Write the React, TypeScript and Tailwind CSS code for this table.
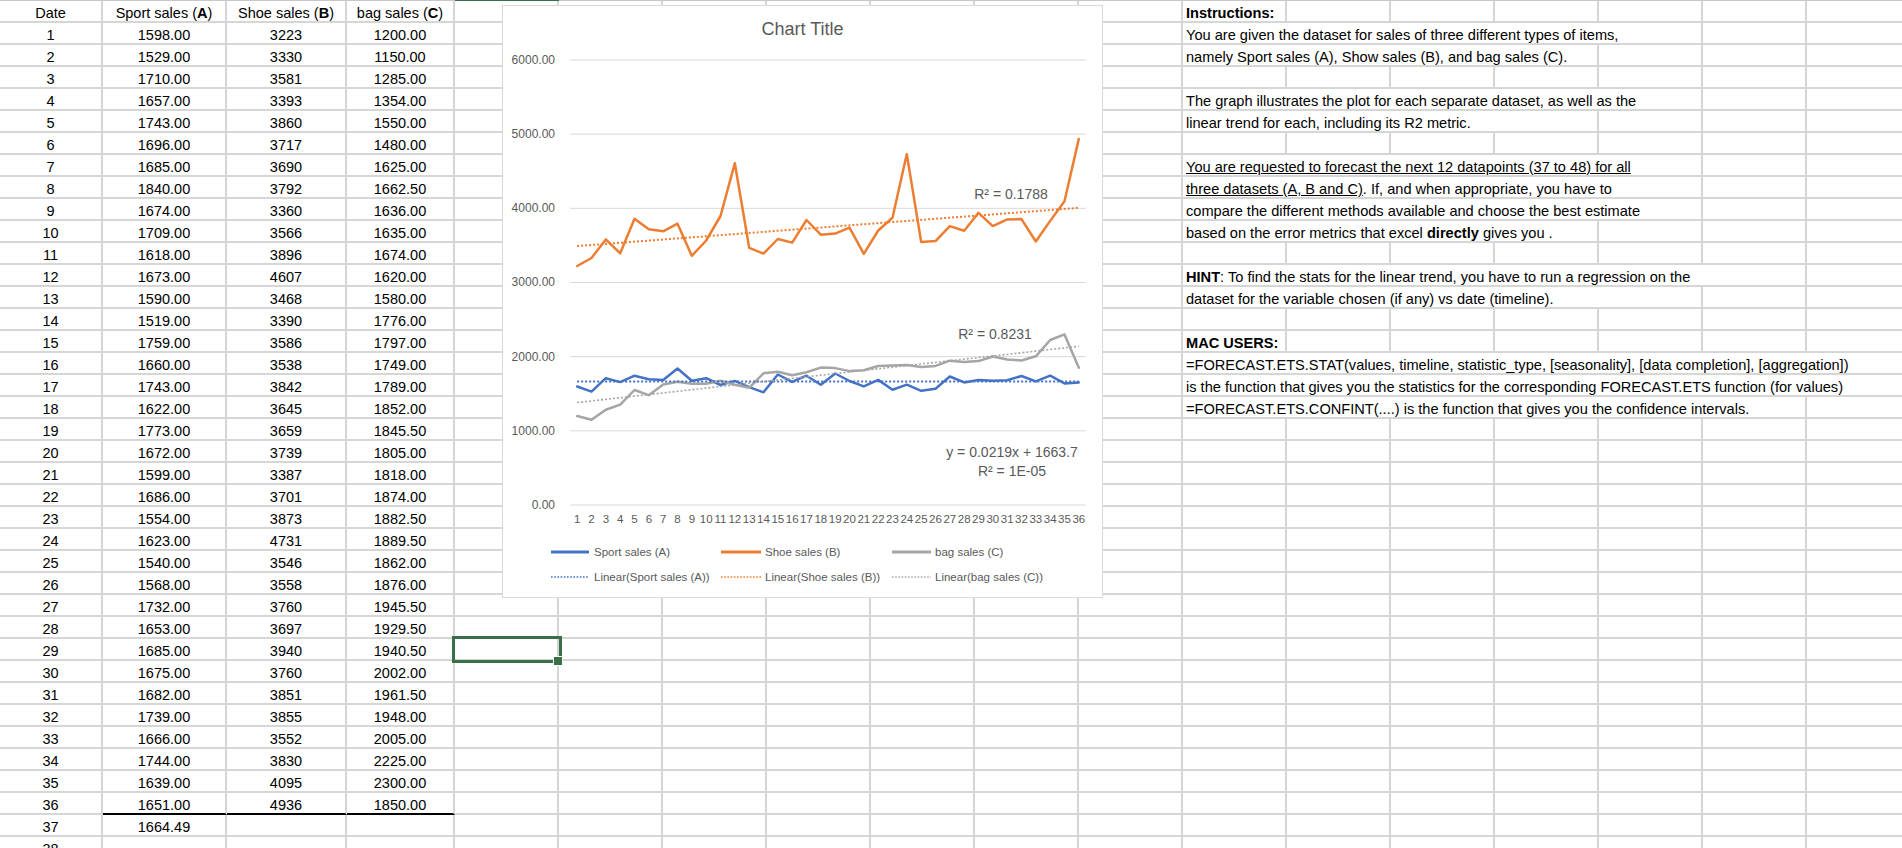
import React from "react";

const sport = [1598,1529,1710,1657,1743,1696,1685,1840,1674,1709,1618,1673,1590,1519,1759,1660,1743,1622,1773,1672,1599,1686,1554,1623,1540,1568,1732,1653,1685,1675,1682,1739,1666,1744,1639,1651];
const shoe = [3223,3330,3581,3393,3860,3717,3690,3792,3360,3566,3896,4607,3468,3390,3586,3538,3842,3645,3659,3739,3387,3701,3873,4731,3546,3558,3760,3697,3940,3760,3851,3855,3552,3830,4095,4936];
const bag = [1200,1150,1285,1354,1550,1480,1625,1662.5,1636,1635,1674,1620,1580,1776,1797,1749,1789,1852,1845.5,1805,1818,1874,1882.5,1889.5,1862,1876,1945.5,1929.5,1940.5,2002,1961.5,1948,2005,2225,2300,1850];

const X0 = 67;
const PW = 516;
const Y0 = 499;
const STEP = 74.17;
const px = (i: number) => X0 + (i + 0.5) * (PW / 36);
const py = (v: number) => Y0 - (v / 1000) * STEP;

function linreg(ys: number[]) {
  const n = ys.length;
  let sx = 0, sy = 0, sxx = 0, sxy = 0;
  ys.forEach((y, i) => {
    const x = i + 1;
    sx += x; sy += y; sxx += x * x; sxy += x * y;
  });
  const slope = (n * sxy - sx * sy) / (n * sxx - sx * sx);
  const intercept = (sy - slope * sx) / n;
  return { slope, intercept };
}

const pts = (ys: number[]) => ys.map((v, i) => `${px(i).toFixed(1)},${py(v).toFixed(1)}`).join(" ");

function Trend({ ys, color, w }: { ys: number[]; color: string; w: number }) {
  const { slope, intercept } = linreg(ys);
  return (
    <line
      x1={px(0)}
      y1={py(intercept + slope * 1)}
      x2={px(35)}
      y2={py(intercept + slope * 36)}
      stroke={color}
      strokeWidth={w}
      strokeDasharray="2 2"
    />
  );
}

function Chart() {
  const grey = "#595959";
  return (
    <div className="absolute left-[502px] top-[5px] w-[601px] h-[593px] bg-white border border-[#d9d9d9]">
      <svg width={599} height={591} className="block" fontFamily="'Liberation Sans', Arial, sans-serif">
        <text x={299.5} y={23} textAnchor="middle" dominantBaseline="central" fontSize={18} fill={grey}>
          Chart Title
        </text>
        {[6000, 5000, 4000, 3000, 2000, 1000, 0].map((v) => (
          <g key={v}>
            <line x1={X0} x2={X0 + PW} y1={py(v)} y2={py(v)} stroke="#d9d9d9" strokeWidth={1} />
            <text x={52} y={py(v)} textAnchor="end" dominantBaseline="central" fontSize={12} fill={grey}>
              {v === 0 ? "0.00" : `${v}.00`}
            </text>
          </g>
        ))}
        {Array.from({ length: 36 }, (_, i) => (
          <text key={i} x={px(i)} y={513} textAnchor="middle" dominantBaseline="central" fontSize={11.5} fill={grey}>
            {i + 1}
          </text>
        ))}
        <polyline points={pts(sport)} fill="none" stroke="#4472C4" strokeWidth={2.5} strokeLinejoin="round" strokeLinecap="round" />
        <polyline points={pts(shoe)} fill="none" stroke="#ED7D31" strokeWidth={2.5} strokeLinejoin="round" strokeLinecap="round" />
        <polyline points={pts(bag)} fill="none" stroke="#A5A5A5" strokeWidth={2.5} strokeLinejoin="round" strokeLinecap="round" />
        <Trend ys={sport} color="#4472C4" w={2} />
        <Trend ys={shoe} color="#ED7D31" w={2} />
        <Trend ys={bag} color="#A5A5A5" w={1.6} />

        <text x={508} y={188} textAnchor="middle" dominantBaseline="central" fontSize={14} fill={grey}>
          R² = 0.1788
        </text>
        <text x={492} y={328} textAnchor="middle" dominantBaseline="central" fontSize={14} fill={grey}>
          R² = 0.8231
        </text>
        <text x={509} y={446} textAnchor="middle" dominantBaseline="central" fontSize={14} fill={grey}>
          y = 0.0219x + 1663.7
        </text>
        <text x={509} y={465} textAnchor="middle" dominantBaseline="central" fontSize={14} fill={grey}>
          R² = 1E-05
        </text>

        {/* legend */}
        <line x1={48} x2={86} y1={546} y2={546} stroke="#4472C4" strokeWidth={3} />
        <text x={91} y={546} dominantBaseline="central" fontSize={11.5} fill={grey}>Sport sales (A)</text>
        <line x1={218} x2={258} y1={546} y2={546} stroke="#ED7D31" strokeWidth={3} />
        <text x={262} y={546} dominantBaseline="central" fontSize={11.5} fill={grey}>Shoe sales (B)</text>
        <line x1={389} x2={428} y1={546} y2={546} stroke="#A5A5A5" strokeWidth={3} />
        <text x={432} y={546} dominantBaseline="central" fontSize={11.5} fill={grey}>bag sales (C)</text>

        <line x1={48} x2={86} y1={571} y2={571} stroke="#4472C4" strokeWidth={1.6} strokeDasharray="1.6 1.6" />
        <text x={91} y={571} dominantBaseline="central" fontSize={11.5} fill={grey}>Linear(Sport sales (A))</text>
        <line x1={218} x2={258} y1={571} y2={571} stroke="#ED7D31" strokeWidth={1.6} strokeDasharray="1.6 1.6" />
        <text x={262} y={571} dominantBaseline="central" fontSize={11.5} fill={grey}>Linear(Shoe sales (B))</text>
        <line x1={389} x2={428} y1={571} y2={571} stroke="#A5A5A5" strokeWidth={1.4} strokeDasharray="1.6 1.6" />
        <text x={432} y={571} dominantBaseline="central" fontSize={11.5} fill={grey}>Linear(bag sales (C))</text>
      </svg>
    </div>
  );
}

const instr: Record<number, { span: number; node: React.ReactNode }> = {
  0: { span: 1, node: <b>Instructions:</b> },
  1: { span: 5, node: "You are given the dataset for sales of three different types of items," },
  2: { span: 4, node: "namely Sport sales (A), Show sales (B), and bag sales (C)." },
  4: { span: 5, node: "The graph illustrates the plot for each separate dataset, as well as the" },
  5: { span: 4, node: "linear trend for each, including its R2 metric." },
  7: { span: 5, node: <u>You are requested to forecast the next 12 datapoints (37 to 48) for all</u> },
  8: {
    span: 5,
    node: (
      <>
        <u>three datasets (A, B and C)</u>. If, and when appropriate, you have to
      </>
    ),
  },
  9: { span: 5, node: "compare the different methods available and choose the best estimate" },
  10: {
    span: 4,
    node: (
      <>
        based on the error metrics that excel <b>directly</b> gives you .
      </>
    ),
  },
  12: {
    span: 6,
    node: (
      <>
        <b>HINT</b>: To find the stats for the linear trend, you have to run a regression on the
      </>
    ),
  },
  13: { span: 5, node: "dataset for the variable chosen (if any) vs date (timeline)." },
  15: { span: 1, node: <b>MAC USERS:</b> },
  16: {
    span: 7,
    node: "=FORECAST.ETS.STAT(values, timeline, statistic_type, [seasonality], [data completion], [aggregation])",
  },
  17: {
    span: 7,
    node: "is the function that gives you the statistics for the corresponding FORECAST.ETS function (for values)",
  },
  18: { span: 6, node: "=FORECAST.ETS.CONFINT(....) is the function that gives you the confidence intervals." },
};

const cellBase =
  "border-r-2 border-b-2 border-r-[#d6d6d6] flex items-end justify-center whitespace-nowrap leading-[16px] overflow-visible";
const normalB = "border-b-[#d6d6d6]";
const blackB = "border-b-black";

function Row({ r }: { r: number }) {
  let a: React.ReactNode = r === 0 ? "Date" : String(r);
  let b: React.ReactNode = "";
  let c: React.ReactNode = "";
  let d: React.ReactNode = "";
  if (r === 0) {
    b = <span>Sport sales (<b>A</b>)</span>;
    c = <span>Shoe sales (<b>B</b>)</span>;
    d = <span>bag sales (<b>C</b>)</span>;
  } else if (r <= 36) {
    b = sport[r - 1].toFixed(2);
    c = String(shoe[r - 1]);
    d = bag[r - 1].toFixed(2);
  } else if (r === 37) {
    b = "1664.49";
  }
  const bb = r === 36 ? blackB : normalB;
  const ins = instr[r];
  const span = ins ? ins.span : 1;
  const rest = 8 - span;
  const spanClass =
    span === 1 ? "col-span-1" : span === 3 ? "col-span-3" : span === 4 ? "col-span-4" : span === 5 ? "col-span-5" : span === 6 ? "col-span-6" : "col-span-7";
  return (
    <div className="grid grid-cols-[103px_124px_120px_108px_repeat(15,104px)] h-[22px]">
      <div className={`${cellBase} ${normalB}`}>{a}</div>
      <div className={`${cellBase} ${bb}`}>{b}</div>
      <div className={`${cellBase} ${bb}`}>{c}</div>
      <div className={`${cellBase} ${bb}`}>{d}</div>
      {Array.from({ length: 7 }, (_, i) => (
        <div key={"e" + i} className={`${cellBase} ${normalB}`} />
      ))}
      <div className={`${cellBase} ${normalB} ${spanClass} !justify-start pl-[3px] text-[14.6px]`}>
        <span>{ins ? ins.node : ""}</span>
      </div>
      {Array.from({ length: rest }, (_, i) => (
        <div key={"r" + i} className={`${cellBase} ${normalB}`} />
      ))}
    </div>
  );
}

export default function App() {
  return (
    <div className="relative w-[1902px] h-[848px] overflow-hidden bg-white text-black text-[14.5px] font-['Liberation_Sans',Arial,sans-serif]">
      <div className="grid grid-cols-[103px_124px_120px_108px_repeat(15,104px)] h-[1px]">
        <div className="col-span-4 bg-[#c8c8c8]" />
        <div className="bg-[#3a7049]" />
        <div className="col-span-14 bg-[#c8c8c8]" />
      </div>
      {Array.from({ length: 39 }, (_, r) => (
        <Row key={r} r={r} />
      ))}
      <Chart />
      {/* selected cell */}
      <div className="absolute left-[452px] top-[636px] w-[110px] h-[27px] border-[3px] border-[#3a7049]" />
      <div className="absolute left-[553px] top-[656px] w-[10px] h-[10px] bg-[#3a7049] border border-white" />
    </div>
  );
}
